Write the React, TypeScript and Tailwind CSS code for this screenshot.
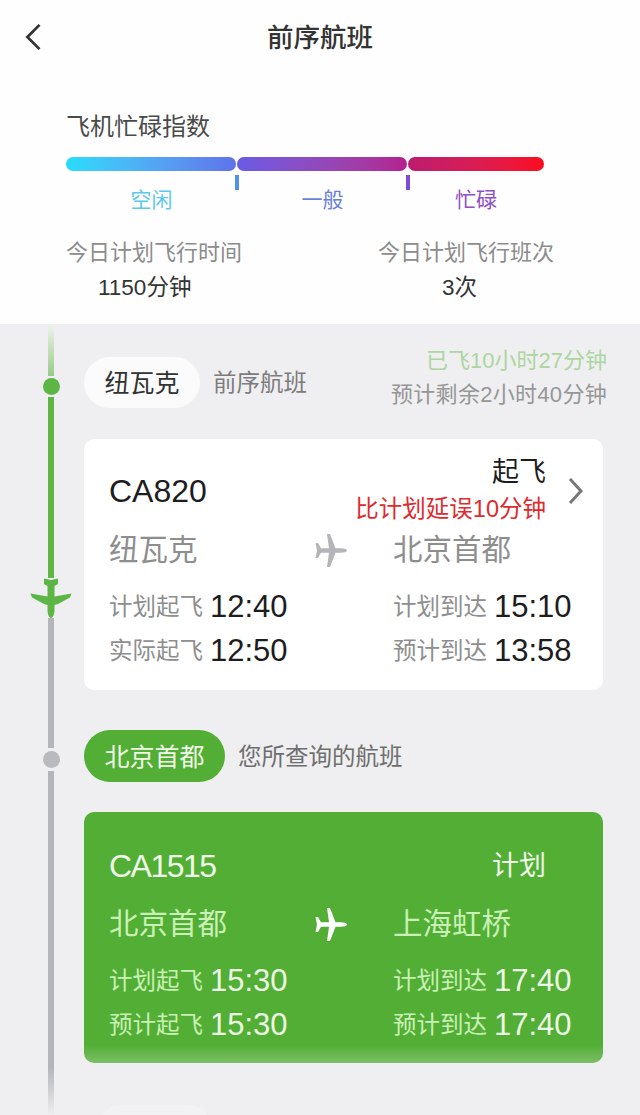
import React from 'react';

function PlaneRight({ className }: { className?: string }) {
  return (
    <svg viewBox="0 0 32 33" className={`w-[32px] h-[33px] shrink-0 ${className ?? ''}`} fill="currentColor">
      <path d="M32 16.5C32 18 28.500 18.700 25 18.700H20.500L15 33H12L14 18.700H6L3 24H.5L2 16.500.5 9H3L6 14.300H14L12 0H15L20.500 14.300H25C28.500 14.300 32 15 32 16.500Z" />
    </svg>
  );
}

function PlaneDown() {
  return (
    <svg viewBox="0 0 42 40" className="w-[42px] h-[40px] shrink-0 text-[#5cb545]" fill="currentColor">
      <path d="M21 40C19 40 17.500 36 17.500 32V27L14 26 2 19.500 0.500 15.500 17.500 18.500V8L14 6V0.500L21 2 28 0.500V6L24.500 8V18.500L41.500 15.500 40 19.500 28 26 24.500 27V32C24.500 36 23 40 21 40Z" />
    </svg>
  );
}

function Timeline() {
  return (
    <div className="w-[42px] ml-[30px] mr-[12px] shrink-0 flex flex-col items-center">
      <div className="w-[6px] h-[52px] bg-gradient-to-b from-[#eef3ec] to-[#97cb88]" />
      <div className="w-[17px] h-[17px] mt-[2px] rounded-full bg-[#5cb545]" />
      <div className="w-[6px] h-[181px] mt-[2px] bg-[#5cb545]" />
      <PlaneDown />
      <div className="w-[6px] h-[130px] bg-[#b4b5b9]" />
      <div className="w-[17px] h-[17px] mt-[3px] rounded-full bg-[#b9babd]" />
      <div className="w-[6px] h-[344px] mt-[3px] bg-gradient-to-b from-[#b4b5b9] from-[86%] to-[#eeeef0]" />
    </div>
  );
}

function BusySegment({
  label,
  bar,
  text,
  tick,
}: {
  label: string;
  bar: string;
  text: string;
  tick?: string;
}) {
  return (
    <div className="relative">
      <div className={`h-[14px] rounded-full ${bar} ${tick ? 'mr-[1px]' : ''}`} />
      {tick && <div className={`absolute right-[-2px] top-[18px] w-[4px] h-[15px] ${tick}`} />}
      <div className={`mt-[14px] h-[30px] leading-[30px] text-center text-[21px] ${text}`}>{label}</div>
    </div>
  );
}

function TimeRow({ label, time, dark }: { label: string; time: string; dark?: boolean }) {
  return (
    <div className="flex items-center h-[44px]">
      <span className={`w-[93px] pt-[2px] text-[23.500px] whitespace-nowrap ${dark ? 'text-[#8e8e8e]' : 'text-[#c9f1b6]'}`}>
        {label}
      </span>
      <span className={`ml-[8px] text-[31px] ${dark ? 'text-[#1d1d1f]' : 'text-[#ecf9e4]'}`}>{time}</span>
    </div>
  );
}

function FlightCard({
  no,
  from,
  to,
  rows,
  dark,
  head,
}: {
  no: string;
  from: string;
  to: string;
  rows: [string, string, string, string][];
  dark?: boolean;
  head: React.ReactNode;
}) {
  const city = dark ? 'text-[#8e8e8e]' : 'text-[#c9f1b6]';
  return (
    <section
      className={`pl-[25px] rounded-[10px] ${
        dark ? 'bg-white pb-[17px]' : 'bg-gradient-to-b from-[#52ae34] from-[93%] to-[#7cbf66] pb-[16px]'
      }`}
    >
      <div className={`flex items-center ${dark ? 'pt-[13px] pr-[20px]' : 'pt-[16px] h-[91px] pr-[57px]'}`}>
        <span className={`flex-1 text-[32px] ${dark ? 'text-[#1d1d1f]' : 'text-[#f0faea] tracking-[-1.500px]'}`}>{no}</span>
        {head}
      </div>
      <div className="mt-[1px] flex items-center h-[40px]">
        <span className={`w-[206px] text-[29.500px] leading-[40px] ${city}`}>{from}</span>
        <PlaneRight className={dark ? 'text-[#b4b5b9]' : 'text-white'} />
        <span className={`ml-[46px] text-[29.500px] leading-[40px] ${city}`}>{to}</span>
      </div>
      <div className="mt-[15px] flex flex-col">
        {rows.map((r) => (
          <div key={r[0]} className="grid grid-cols-[284px_1fr]">
            <TimeRow label={r[0]} time={r[1]} dark={dark} />
            <TimeRow label={r[2]} time={r[3]} dark={dark} />
          </div>
        ))}
      </div>
    </section>
  );
}

export default function App() {
  return (
    <div className="w-[640px] h-[1115px] overflow-hidden bg-[#efeff1] font-['Liberation_Sans','Noto_Sans_CJK_SC',sans-serif]">
      <div className="bg-[#fefefe] h-[324px]">
        <header className="relative h-[74px] flex items-center justify-center">
          <svg viewBox="0 0 18 30" className="absolute left-[24px] top-[23px] w-[18px] h-[28px]" fill="none" stroke="#333" strokeWidth="3">
            <path d="M16 2 3 15l13 13" />
          </svg>
          <h1 className="pt-[3px] text-[26.500px] font-medium text-[#333]">前序航班</h1>
        </header>

        <div className="pl-[66px]">
          <div className="mt-[35px] h-[35px] leading-[35px] text-[24px] text-[#4a4a4a]">飞机忙碌指数</div>
          <div className="mt-[13px] grid grid-cols-[171px_171px_136px]">
            <BusySegment label="空闲" bar="bg-gradient-to-r from-[#25dcfb] to-[#5f72ea]" text="text-[#5cc8ee]" tick="bg-[#4f93e8]" />
            <BusySegment label="一般" bar="bg-gradient-to-r from-[#6a5ae6] to-[#b3208f]" text="text-[#6b7fdc]" tick="bg-[#7d4fd8]" />
            <BusySegment label="忙碌" bar="bg-gradient-to-r from-[#bb1c6f] to-[#fb0a1c]" text="text-[#8f4fc8]" />
          </div>
          <div className="mt-[23px] grid grid-cols-[312px_1fr] text-[22px]">
            <div>
              <div className="h-[30px] leading-[30px] text-[#8c8c8c]">今日计划飞行时间</div>
              <div className="mt-[5px] h-[30px] leading-[30px] pl-[32px] text-[22.500px] text-[#333]">1150分钟</div>
            </div>
            <div>
              <div className="h-[30px] leading-[30px] text-[#8c8c8c]">今日计划飞行班次</div>
              <div className="mt-[5px] h-[30px] leading-[30px] pl-[64px] text-[22.500px] text-[#333]">3次</div>
            </div>
          </div>
        </div>
      </div>

      <div className="flex">
        <Timeline />
        <div className="w-[519px] pt-[33px]">
          <div className="flex items-center h-[51px]">
            <span className="h-[51px] w-[116px] pt-[3px] flex items-center justify-center rounded-full bg-[#fbfbfc] text-[25px] text-[#333]">
              纽瓦克
            </span>
            <span className="ml-[13px] pt-[3px] flex-1 text-[23.500px] text-[#7c7c7c]">前序航班</span>
            <div className="-mr-[4px] mb-[10px] flex flex-col items-end text-[22px]">
              <span className="h-[34px] leading-[34px] text-[#acd6a0]">已飞10小时27分钟</span>
              <span className="h-[34px] leading-[34px] tracking-[0.300px] text-[#969696]">预计剩余2小时40分钟</span>
            </div>
          </div>

          <div className="mt-[31px]">
            <FlightCard
              dark
              no="CA820"
              from="纽瓦克"
              to="北京首都"
              rows={[
                ['计划起飞', '12:40', '计划到达', '15:10'],
                ['实际起飞', '12:50', '预计到达', '13:58'],
              ]}
              head={
                <>
                  <div className="flex flex-col items-end">
                    <span className="h-[38px] pt-[1px] leading-[38px] text-[27px] text-[#1d1d1f]">起飞</span>
                    <span className="h-[39px] leading-[39px] text-[23.500px] text-[#e02a2e]">比计划延误10分钟</span>
                  </div>
                  <svg viewBox="0 0 15 28" className="ml-[22px] w-[15px] h-[28px]" fill="none" stroke="#777" strokeWidth="3">
                    <path d="M2 2l11 12L2 26" />
                  </svg>
                </>
              }
            />
          </div>

          <div className="mt-[40px] flex items-center h-[52px]">
            <span className="h-[52px] w-[141px] pt-[3px] flex items-center justify-center rounded-full bg-[#52ae34] text-[25px] text-[#f0faea]">
              北京首都
            </span>
            <span className="ml-[13px] pt-[3px] text-[23.500px] text-[#6e6e6e]">您所查询的航班</span>
          </div>

          <div className="mt-[30px]">
            <FlightCard
              no="CA1515"
              from="北京首都"
              to="上海虹桥"
              rows={[
                ['计划起飞', '15:30', '计划到达', '17:40'],
                ['预计起飞', '15:30', '预计到达', '17:40'],
              ]}
              head={<span className="pt-[2px] text-[27px] text-[#f0faea]">计划</span>}
            />
          </div>

          <div className="mt-[42px] ml-[16px] h-[40px] w-[110px] rounded-full bg-[#f2f2f4]" />
        </div>
      </div>
    </div>
  );
}
